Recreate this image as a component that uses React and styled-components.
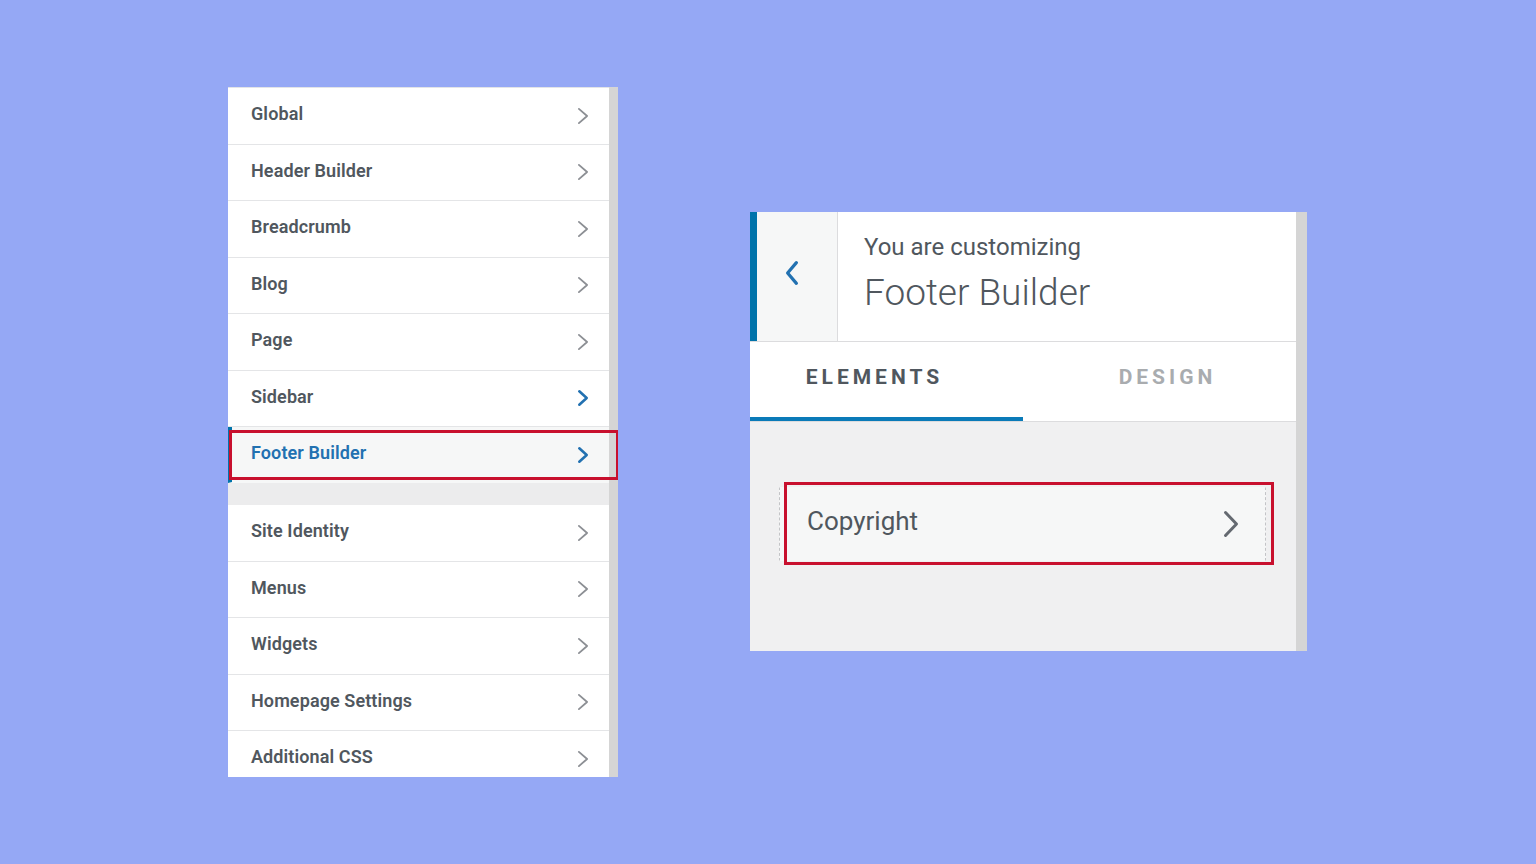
import React from "react";
import styled, { createGlobalStyle } from "styled-components";

const Global = createGlobalStyle`
  html, body { margin: 0; padding: 0; }
  body { font-family: Roboto, "Noto Sans", Arial, sans-serif; }
`;

const Page = styled.div`
  width: 1536px;
  height: 864px;
  background: #95a8f5;
  display: flex;
  align-items: flex-start;
  padding: 87px 0 0 228px;
  gap: 132px;
  box-sizing: border-box;
  overflow: hidden;
`;

const LeftPanel = styled.div`
  display: flex;
  height: 690px;
  width: 390px;
  overflow: hidden;
`;

const List = styled.div`
  flex: 1;
  background: #ffffff;
  border-top: 1px solid #e2e4e7;
  display: flex;
  flex-direction: column;
`;

const Scrollbar = styled.div`
  width: ${(p) => p.$w}px;
  background: #d5d5d5;
  flex-shrink: 0;
`;

const Row = styled.div`
  position: relative;
  height: ${(p) => (p.$active ? 56 : 56.5)}px;
  flex-shrink: 0;
  box-sizing: border-box;
  display: flex;
  align-items: center;
  justify-content: space-between;
  padding: 0 20px 0 ${(p) => (p.$active ? 19 : 23)}px;
  border-bottom: 1px solid ${(p) => (p.$active ? "transparent" : "#e4e5e7")};
  border-left: ${(p) => (p.$active ? "4px solid #0073aa" : "none")};
  background: ${(p) => (p.$active ? "#f6f7f7" : "#ffffff")};
`;

const RowLabel = styled.span`
  font-size: 18px;
  font-weight: 600;
  letter-spacing: 0.1px;
  color: ${(p) => (p.$active ? "#2271b1" : "#50575e")};
  margin-top: -4px;
`;

const Gap = styled.div`
  height: 22px;
  flex-shrink: 0;
  background: #ececed;
`;

const Annotation = styled.div`
  position: absolute;
  border: 3px solid #c8102e;
  pointer-events: none;
`;

const RightPanel = styled.div`
  margin-top: 125px;
  display: flex;
  width: 557px;
  height: 439px;
`;

const RightMain = styled.div`
  flex: 1;
  display: flex;
  flex-direction: column;
  background: #f0f0f1;
`;

const Header = styled.div`
  height: 129px;
  display: flex;
  background: #ffffff;
  border-bottom: 1px solid #dcdcde;
`;

const BackButton = styled.div`
  width: 70px;
  border-left: 7px solid #0073aa;
  border-right: 1px solid #dcdcde;
  background: #f6f7f7;
  display: flex;
  align-items: center;
  justify-content: center;
  padding: 0 10px 8px 0;
  box-sizing: content-box;
`;

const Titles = styled.div`
  display: flex;
  flex-direction: column;
  padding: 20px 0 0 26px;
  color: #50575e;
`;

const Sub = styled.div`
  font-size: 24px;
  font-weight: 400;
  line-height: 30px;
`;

const Title = styled.div`
  font-size: 37px;
  font-weight: 300;
  line-height: 46px;
  margin-top: 8px;
`;

const Tabs = styled.div`
  display: grid;
  grid-template-columns: 273px 1fr;
  height: 79px;
  background: #ffffff;
  border-bottom: 1px solid #dcdcde;
`;

const Tab = styled.div`
  display: flex;
  align-items: center;
  justify-content: center;
  box-sizing: border-box;
  padding: ${(p) => (p.$active ? "0 24px 5px 0" : "0 0 5px 16px")};
  font-size: 21px;
  font-weight: 700;
  letter-spacing: 4px;
  color: ${(p) => (p.$active ? "#50575e" : "#a9acaf")};
  border-bottom: 4px solid ${(p) => (p.$active ? "#0a7ab8" : "transparent")};
`;

const Body = styled.div`
  flex: 1;
  padding: 65px 30px 0 29px;
`;

const CardWrap = styled.div`
  position: relative;
`;

const Card = styled.div`
  height: 74px;
  box-sizing: border-box;
  background: #f6f7f7;
  border: 1px dashed #c3c4c7;
  border-top-color: #f6f7f7;
  border-bottom-color: #f6f7f7;
  display: flex;
  align-items: center;
  justify-content: space-between;
  padding: 0 26px 0 27px;
`;

const CardLabel = styled.span`
  font-size: 26px;
  color: #50575e;
  margin-top: -6px;
`;

const Chevron = ({ dir = "right", color, w, h, sw }) => (
  <svg width={w} height={h} viewBox={`0 0 ${w} ${h}`} fill="none">
    <polyline
      points={
        dir === "right"
          ? `${sw / 2 + 1},${sw / 2 + 1} ${w - sw / 2 - 1},${h / 2} ${sw / 2 + 1},${h - sw / 2 - 1}`
          : `${w - sw / 2 - 1},${sw / 2 + 1} ${sw / 2 + 1},${h / 2} ${w - sw / 2 - 1},${h - sw / 2 - 1}`
      }
      stroke={color}
      strokeWidth={sw}
      strokeLinecap="round"
      strokeLinejoin="round"
    />
  </svg>
);

const top = ["Global", "Header Builder", "Breadcrumb", "Blog", "Page", "Sidebar"];
const bottom = ["Site Identity", "Menus", "Widgets", "Homepage Settings", "Additional CSS"];

export default function App() {
  return (
    <>
      <Global />
      <Page>
        <LeftPanel>
          <List>
            {top.map((t) => (
              <Row key={t}>
                <RowLabel>{t}</RowLabel>
                <Chevron
                  w={12}
                  h={18}
                  sw={t === "Sidebar" ? 2.6 : 1.8}
                  color={t === "Sidebar" ? "#2271b1" : "#8c8f94"}
                />
              </Row>
            ))}
            <Row $active>
              <RowLabel $active>Footer Builder</RowLabel>
              <Chevron w={12} h={18} sw={2.6} color="#2271b1" />
              <Annotation style={{ top: 3, bottom: 2, left: -3, right: -10 }} />
            </Row>
            <Gap />
            {bottom.map((t) => (
              <Row key={t}>
                <RowLabel>{t}</RowLabel>
                <Chevron w={12} h={18} sw={1.8} color="#8c8f94" />
              </Row>
            ))}
          </List>
          <Scrollbar $w={9} />
        </LeftPanel>

        <RightPanel>
          <RightMain>
            <Header>
              <BackButton>
                <Chevron dir="left" w={14} h={26} sw={3.2} color="#2271b1" />
              </BackButton>
              <Titles>
                <Sub>You are customizing</Sub>
                <Title>Footer Builder</Title>
              </Titles>
            </Header>
            <Tabs>
              <Tab $active>ELEMENTS</Tab>
              <Tab>DESIGN</Tab>
            </Tabs>
            <Body>
              <CardWrap>
                <Card>
                  <CardLabel>Copyright</CardLabel>
                  <Chevron w={16} h={28} sw={3} color="#646970" />
                </Card>
                <Annotation style={{ top: -5, bottom: -4, left: 5, right: -8 }} />
              </CardWrap>
            </Body>
          </RightMain>
          <Scrollbar $w={11} />
        </RightPanel>
      </Page>
    </>
  );
}
